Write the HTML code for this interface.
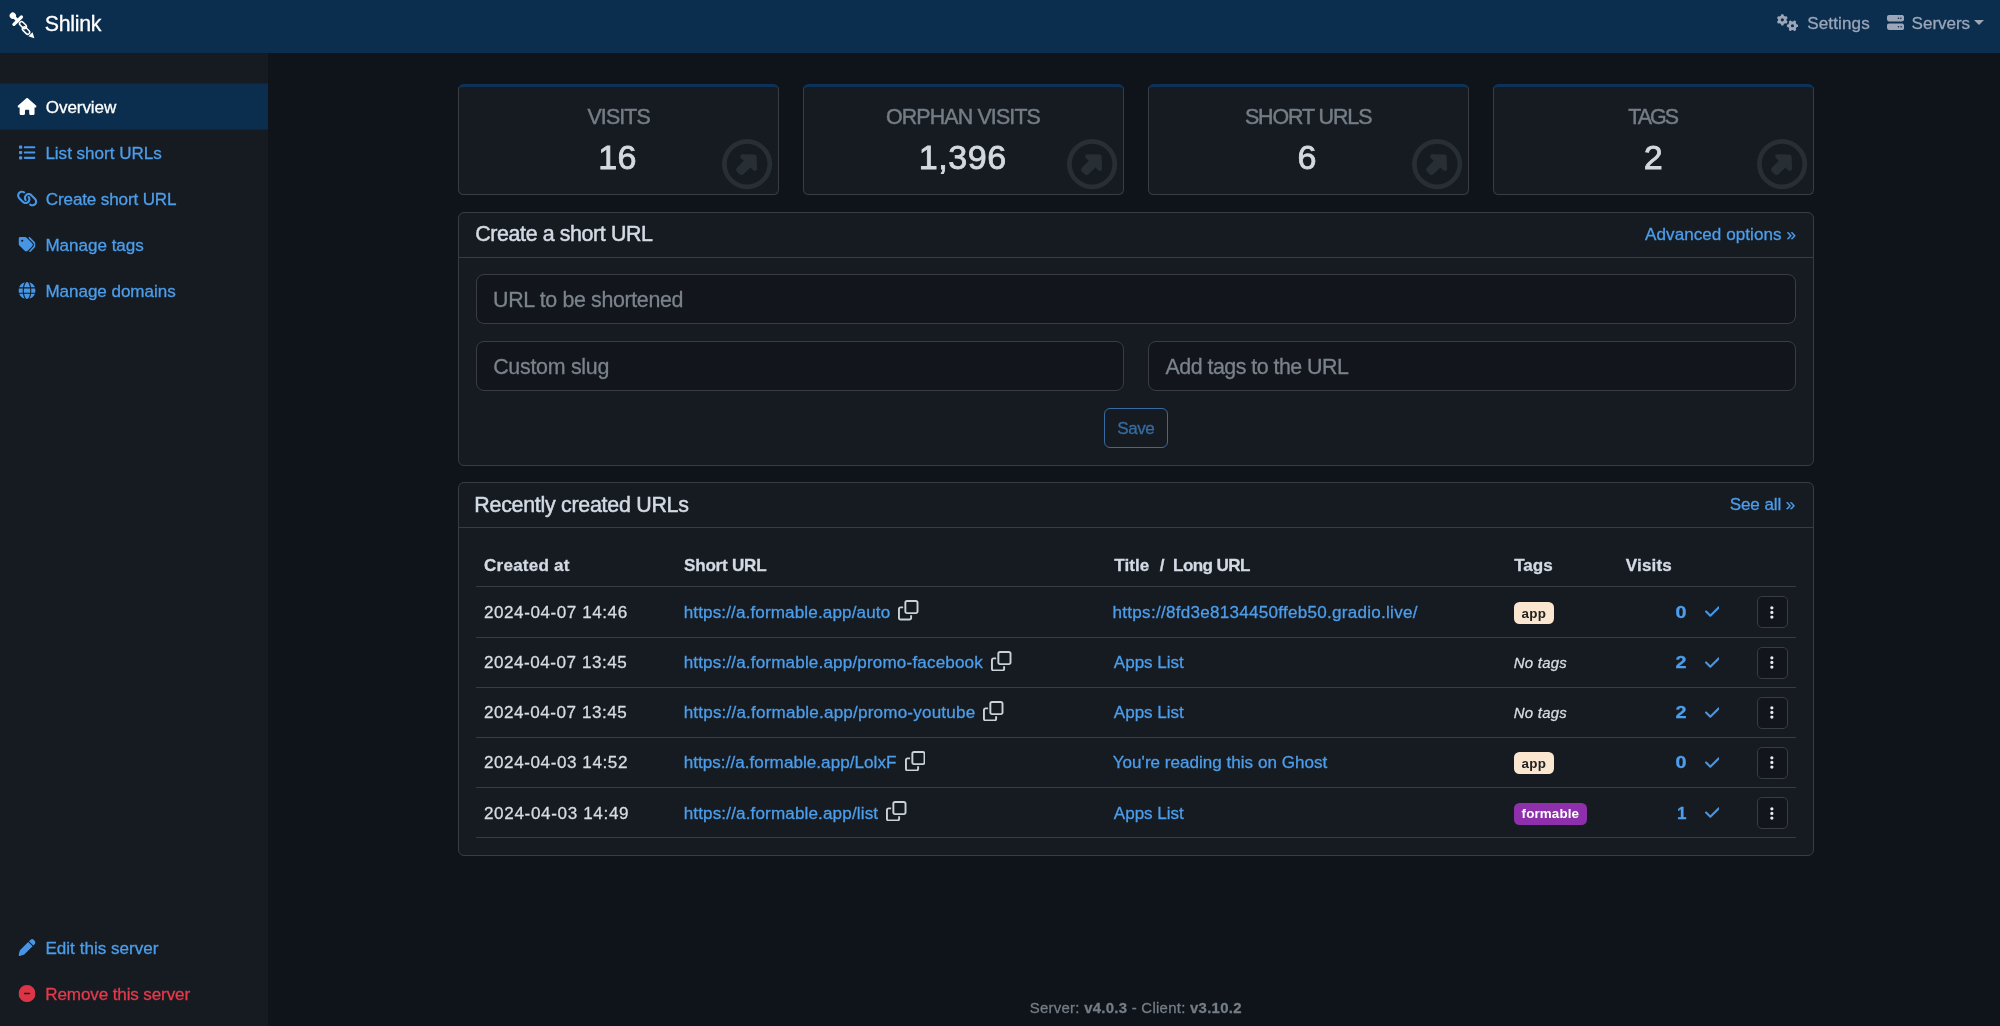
<!DOCTYPE html>
<html lang="en">
<head>
<meta charset="utf-8">
<title>Shlink</title>
<style>
*{box-sizing:border-box}
html,body{margin:0;padding:0}
body{width:2000px;height:1026px;overflow:hidden;background:#0f131a;color:#c9d1d9;font-family:"Liberation Sans",sans-serif;font-size:17.07px;line-height:25.6px;position:relative}
a{color:#4696e5;text-decoration:none}
svg{display:block}
span{white-space:nowrap;-webkit-text-stroke:.3px}
.navbar,.aside,main{will-change:transform}
/* navbar */
.navbar{position:absolute;left:0;top:0;width:2000px;height:53px;background:#0b2d4e}
.brand{position:absolute;left:0;top:0;height:53px;color:#fff;font-size:21.33px}
.brand svg{position:absolute;left:4px;top:6px}
.brand .bt{position:absolute;left:44.5px;top:7.5px;line-height:32px}
.nav{list-style:none;margin:0;padding:0}
.nav li{position:absolute;top:10.5px;height:25.6px;line-height:25.6px;color:#9ba6b8}
.nav li svg{position:absolute}
.nav li .nt{position:absolute;top:0}
.caret{position:absolute;left:87.2px;top:9.7px;width:0;height:0;border-left:5.1px solid transparent;border-right:5.1px solid transparent;border-top:5.3px solid #9ba6b8}
/* aside */
.aside{position:absolute;left:0;top:53px;width:268px;height:973px;background:#161b22}
.aside a{position:absolute;left:0;width:268px;height:46px;display:block;color:#4696e5}
.aside a svg{position:absolute}
.aside a .mt{position:absolute;left:45.5px;top:11.4px}
.aside a.active{background:linear-gradient(#112438 0,#112438 1px,#0b2d4e 1px,#0b2d4e 46px,#112438 46px);color:#fff}
.aside a.active svg{margin-top:.5px}
.aside a.active .mt{margin-top:.5px}
.aside a.danger{color:#dc3545}
/* main */
.container{position:absolute;left:458px;top:83.5px;width:1355.5px}
.cards{display:flex;gap:24.5px}
.hcard{position:relative;flex:0 0 320.5px;height:111px;background:#161b22;border:1px solid #393d43;border-top:3.2px solid #0c3257;border-radius:6px;text-align:center;color:#c9d1d9;display:block}
.hcard h5{margin:0;position:absolute;left:0;right:0;top:18.7px;font-size:21.4px;line-height:25.6px;font-weight:normal;color:#747d86;text-transform:uppercase}
.hcard h5 span{-webkit-text-stroke:.45px}
.hcard .num span{-webkit-text-stroke:.8px}
.hcard .num{position:absolute;left:0;right:0;top:50px;font-size:34.13px;line-height:41px;color:#d3d9e1}
.hcard .arr{position:absolute;right:4.9px;bottom:4.7px;opacity:.1}
.card{background:#161b22;border:1px solid #393d43;border-radius:6px}
.card1{position:absolute;left:0;top:128.5px;width:1355.5px;height:253.5px}
.card2{position:absolute;left:0;top:398.4px;width:1355.5px;height:374.1px}
.card2 .card-header{height:45.1px}
.card2 .card-header .t{top:.9px}
th{padding-top:3.2px}
.card-header{height:44.5px;border-bottom:1px solid #393d43;display:flex;justify-content:space-between;align-items:center;padding:0 17px;margin:0;font-weight:normal;font-size:17.07px}
.card-header .t{font-size:21.4px;color:#d3dae3;position:relative;top:.3px}
.card-header .t span{-webkit-text-stroke:.5px}
.card-body{padding:16.5px 17px}
.inp{height:50px;border:1px solid #393d43;border-radius:8px;background:#12151b;color:#7a838c;font-size:21.4px;line-height:32px;padding:8.9px 17.5px 7.1px;white-space:nowrap}
.row2{display:flex;gap:24px;margin-top:17px}
.row2 .inp{flex:1 1 0}
.savewrap{text-align:center;margin-top:16.7px;height:40.5px}
.btn{display:inline-block;width:64px;height:40.5px;border:1px solid #4696e5;border-radius:6px;color:#4696e5;line-height:40px;opacity:.65;text-align:center}
/* table */
table,thead,tbody{display:block;border-collapse:collapse}
tr{display:flex;border-bottom:1px solid #393d43;align-items:center}
thead tr{height:42.4px}
tbody tr:first-child{height:50.75px}
tbody tr{height:50.15px}
th,td{display:block;padding:1.6px 8.5px 0;text-align:left;white-space:nowrap;flex:0 0 auto}
th{font-weight:bold;color:#d3dae3}
.c1{width:200px}.c2{width:429px}.c3{width:400px}.c4{width:112.5px}.c5{width:77.5px}.c6{width:33px}.c7{width:68px}
#th3s{margin:0 8.3px 0 10.9px}
td.c5{text-align:right;font-weight:bold}
td.c2{display:flex;align-items:center}
td.c2 .cp{margin-left:7.2px;position:relative;top:-2.2px}
td.c6 .ck{position:relative;left:1px}
td.c6,td.c7{padding-top:0}
td.c7{position:relative;top:.4px}
td.c5 a.w span{display:inline-block;transform:scaleX(1.16);transform-origin:right center}
.badge{display:inline-block;font-size:13.4px;line-height:12.8px;font-weight:bold;padding:5.9px 0 3.3px;width:40.5px;text-align:center;border-radius:5.5px;vertical-align:middle;position:relative;top:-.5px}
.badge span{-webkit-text-stroke:0}
.notags{font-style:italic;font-size:14.93px}
.dd{display:flex;align-items:center;justify-content:center;margin-left:auto;width:30.5px;height:32px;border:1px solid #393d43;border-radius:5px;background:#12151b}
td.c7{display:flex}
.footer{position:absolute;left:268px;width:1732px;top:995px;text-align:center;font-size:14.93px;color:#747d86;white-space:nowrap}
td{color:#d6dce4}
.mt,td a span,.hl span{color:#4c9eec}
.active .mt{color:#fff}
.danger .mt{color:#e63a4b}
.hcard{border-radius:5.5px}

</style>
</head>
<body>
<nav class="navbar">
  <a class="brand"><svg width="40" height="40" viewBox="0 0 40 40" aria-hidden="true"><g transform="translate(8.8 9.7) rotate(45.5)" fill="#fff" stroke="none">
<circle cx="0" cy="0" r="3.15"/>
<rect x="0" y="-1.55" width="8.6" height="3.1"/>
<rect x="5.3" y="-6.9" width="3.3" height="13.8" rx="1.65"/>
<rect x="9.8" y="-2.7" width="8.0" height="4.0" rx="2" fill="none" stroke="#fff" stroke-width="1.5"/>
<rect x="15.6" y="-1.0" width="8.6" height="4.0" rx="2" fill="none" stroke="#fff" stroke-width="1.5"/>
<path d="M25.6 -2.5 L31.2 0.4 L25.6 3.3 Z"/>
</g></svg><span class="bt"><span id="brand" style="letter-spacing:-0.302px;position:relative;left:0.33px;">Shlink</span></span></a>
  <ul class="nav">
    <li style="left:1777.4px"><svg viewBox="0 0 640 512" width="21.34" height="17.07" style="left:0;top:3.8px" aria-hidden="true"><path fill="currentColor" d="M308.500 135.300c7.100-6.300 9.900-16.200 6.200-25c-2.300-5.300-4.800-10.500-7.600-15.500L304 89.400c-3-5-6.300-9.900-9.800-14.600c-5.700-7.600-15.700-10.100-24.700-7.100l-28.200 9.300c-10.700-8.800-23-16-36.200-20.900L199 27.100c-1.900-9.300-9.100-16.700-18.500-17.800C173.900 8.400 167.200 8 160.400 8h-.7c-6.800 0-13.500 .4-20.100 1.200c-9.400 1.100-16.600 8.600-18.500 17.800L115 56.100c-13.300 5-25.500 12.100-36.200 20.900L50.500 67.800c-9-3-19-.5-24.700 7.100c-3.500 4.700-6.800 9.600-9.900 14.600l-3 5.300c-2.800 5-5.300 10.200-7.600 15.600c-3.700 8.700-.9 18.600 6.200 25l22.200 19.800C32.600 161.900 32 168.900 32 176s.6 14.100 1.700 20.900L11.500 216.700c-7.100 6.300-9.900 16.200-6.200 25c2.300 5.300 4.800 10.500 7.600 15.600l3 5.200c3 5.100 6.300 9.900 9.900 14.600c5.700 7.600 15.700 10.100 24.700 7.100l28.200-9.300c10.700 8.800 23 16 36.200 20.900l6.100 29.100c1.900 9.300 9.100 16.700 18.500 17.800c6.700 .8 13.500 1.200 20.400 1.200s13.700-.4 20.400-1.200c9.400-1.100 16.600-8.600 18.500-17.800l6.100-29.100c13.300-5 25.500-12.100 36.200-20.900l28.200 9.300c9 3 19 .5 24.700-7.100c3.500-4.700 6.800-9.500 9.800-14.600l3.100-5.400c2.800-5 5.300-10.200 7.600-15.500c3.700-8.700 .9-18.600-6.200-25l-22.200-19.800c1.100-6.800 1.700-13.800 1.700-20.900s-.6-14.100-1.700-20.900l22.200-19.800zM112 176a48 48 0 1 1 96 0 48 48 0 1 1 -96 0zM504.700 500.500c6.300 7.100 16.200 9.900 25 6.200c5.300-2.300 10.500-4.800 15.500-7.600l5.400-3.100c5-3 9.900-6.300 14.600-9.800c7.600-5.700 10.100-15.700 7.100-24.700l-9.300-28.200c8.800-10.700 16-23 20.900-36.200l29.100-6.100c9.300-1.900 16.700-9.100 17.800-18.500c.8-6.700 1.200-13.500 1.200-20.400s-.4-13.700-1.200-20.400c-1.100-9.400-8.600-16.600-17.800-18.500L583.900 307c-5-13.300-12.100-25.500-20.900-36.200l9.300-28.200c3-9 .5-19-7.100-24.700c-4.700-3.500-9.600-6.800-14.600-9.900l-5.300-3c-5-2.800-10.200-5.300-15.600-7.600c-8.700-3.700-18.600-.9-25 6.200l-19.800 22.200c-6.800-1.100-13.800-1.700-20.900-1.700s-14.100 .6-20.900 1.700l-19.800-22.200c-6.300-7.100-16.200-9.900-25-6.200c-5.300 2.300-10.500 4.800-15.600 7.600l-5.200 3c-5.100 3-9.900 6.300-14.600 9.900c-7.600 5.700-10.100 15.700-7.100 24.700l9.300 28.200c-8.800 10.700-16 23-20.900 36.200L315.100 313c-9.300 1.900-16.700 9.100-17.800 18.500c-.8 6.700-1.200 13.500-1.200 20.400s.4 13.700 1.200 20.400c1.100 9.400 8.600 16.600 17.800 18.500l29.100 6.100c5 13.300 12.100 25.500 20.900 36.200l-9.300 28.200c-3 9-.5 19 7.100 24.700c4.700 3.500 9.500 6.800 14.600 9.800l5.400 3.100c5 2.800 10.200 5.300 15.500 7.600c8.700 3.700 18.600 .9 25-6.200l19.800-22.200c6.800 1.100 13.800 1.700 20.900 1.700s14.100-.6 20.900-1.700l19.800 22.200zM464 304a48 48 0 1 1 0 96 48 48 0 1 1 0-96z"/></svg><span class="nt" style="left:30.4px"><span id="settings" style="letter-spacing:0.141px;position:relative;left:-0.65px;">Settings</span></span></li>
    <li style="left:1886.4px"><svg viewBox="0 0 512 512" width="17.07" height="17.07" style="left:0.5px;top:3.8px" aria-hidden="true"><path fill="currentColor" d="M64 32C28.700 32 0 60.700 0 96v64c0 35.300 28.700 64 64 64H448c35.300 0 64-28.700 64-64V96c0-35.300-28.700-64-64-64H64zm280 72a24 24 0 1 1 0 48 24 24 0 1 1 0-48zm48 24a24 24 0 1 1 48 0 24 24 0 1 1 -48 0zM64 288c-35.300 0-64 28.700-64 64v64c0 35.300 28.700 64 64 64H448c35.300 0 64-28.700 64-64V352c0-35.300-28.700-64-64-64H64zm280 72a24 24 0 1 1 0 48 24 24 0 1 1 0-48zm56 24a24 24 0 1 1 48 0 24 24 0 1 1 -48 0z"/></svg><span class="nt" style="left:26px"><span id="servers" style="letter-spacing:-0.042px;position:relative;left:-0.80px;">Servers</span></span><i class="caret"></i></li>
  </ul>
</nav>
<aside class="aside">
  <a class="active" style="top:30px;height:47px;padding-top:0"><svg viewBox="0 0 576 512" width="19.20" height="17.07" style="left:17.26px;top:14.46px;transform:translateX(.5px);" aria-hidden="true"><path fill="currentColor" d="M575.8 255.5c0 18-15 32.1-32 32.1h-32l.7 160.2c0 2.700-.2 5.400-.5 8.100V472c0 22.100-17.900 40-40 40H456c-1.100 0-2.200 0-3.300-.1c-1.400 .1-2.800 .1-4.200 .1H416 392c-22.100 0-40-17.900-40-40V448 384c0-17.700-14.300-32-32-32H256c-17.700 0-32 14.300-32 32v64 24c0 22.100-17.900 40-40 40H160 128.100c-1.500 0-3-.1-4.500-.2c-1.200 .1-2.400 .2-3.600 .2H104c-22.100 0-40-17.900-40-40V360c0-.9 0-1.900 .1-2.800V287.600H32c-18 0-32-14-32-32.100c0-9 3-17 10-24L266.400 8c7-7 15-8 22-8s15 2 21 7L564.800 231.500c8 7 12 15 11 24z"/></svg><span class="mt"><span id="m1" style="letter-spacing:-0.101px;position:relative;left:0.37px;">Overview</span></span></a>
  <a style="top:76.5px"><svg viewBox="0 0 512 512" width="17.07" height="17.07" style="left:18.33px;top:14.46px;transform:translateX(.5px);" aria-hidden="true"><path fill="currentColor" d="M40 48C26.700 48 16 58.700 16 72v48c0 13.300 10.700 24 24 24H88c13.300 0 24-10.700 24-24V72c0-13.300-10.700-24-24-24H40zM192 64c-17.700 0-32 14.300-32 32s14.300 32 32 32H480c17.700 0 32-14.300 32-32s-14.300-32-32-32H192zm0 160c-17.700 0-32 14.300-32 32s14.300 32 32 32H480c17.700 0 32-14.300 32-32s-14.300-32-32-32H192zm0 160c-17.700 0-32 14.300-32 32s14.300 32 32 32H480c17.700 0 32-14.300 32-32s-14.300-32-32-32H192zM16 232v48c0 13.300 10.700 24 24 24H88c13.300 0 24-10.700 24-24V232c0-13.300-10.700-24-24-24H40c-13.300 0-24 10.700-24 24zM40 368c-13.300 0-24 10.700-24 24v48c0 13.300 10.700 24 24 24H88c13.300 0 24-10.700 24-24V392c0-13.300-10.700-24-24-24H40z"/></svg><span class="mt"><span id="m2" style="letter-spacing:-0.019px;position:relative;left:-0.14px;">List short URLs</span></span></a>
  <a style="top:122.5px"><svg viewBox="0 0 640 512" width="21.34" height="17.07" style="left:16.20px;top:14.46px;transform:translateX(.5px) scaleX(-1);" aria-hidden="true"><path fill="currentColor" d="M579.800 267.700c56.500-56.500 56.500-148 0-204.500c-50-50-128.800-56.500-186.300-15.400l-1.600 1.100c-14.400 10.300-17.700 30.300-7.400 44.600s30.300 17.700 44.600 7.400l1.600-1.100c32.100-22.900 76-19.300 103.800 8.600c31.500 31.500 31.500 82.500 0 114L422.300 334.800c-31.500 31.500-82.500 31.500-114 0c-27.900-27.900-31.500-71.800-8.600-103.800l1.100-1.600c10.300-14.400 6.900-34.400-7.400-44.600s-34.400-6.900-44.600 7.400l-1.100 1.600C206.500 251.200 213 330 263 380c56.500 56.500 148 56.500 204.500 0L579.800 267.700zM60.200 244.300c-56.500 56.500-56.500 148 0 204.500c50 50 128.800 56.500 186.300 15.400l1.600-1.100c14.400-10.300 17.700-30.300 7.400-44.600s-30.300-17.700-44.600-7.400l-1.600 1.100c-32.100 22.900-76 19.300-103.800-8.600C74 372 74 321 105.500 289.500L217.700 177.200c31.500-31.500 82.500-31.500 114 0c27.900 27.900 31.500 71.800 8.600 103.900l-1.100 1.600c-10.300 14.400-6.900 34.400 7.400 44.600s34.400 6.900 44.600-7.400l1.100-1.600C433.500 260.800 427 182 377 132c-56.500-56.500-148-56.500-204.500 0L60.200 244.300z"/></svg><span class="mt"><span id="m3" style="letter-spacing:-0.137px;position:relative;left:0.31px;">Create short URL</span></span></a>
  <a style="top:168.5px"><svg viewBox="0 0 512 512" width="17.07" height="17.07" style="left:18.33px;top:14.46px;transform:translateX(.5px);" aria-hidden="true"><path fill="currentColor" d="M345 39.100L472.800 168.400c52.400 53 52.400 138.200 0 191.200L360.800 472.900c-9.300 9.400-24.500 9.500-33.900 .2s-9.500-24.500-.2-33.900L438.600 325.900c33.900-34.300 33.900-89.400 0-123.700L310.900 72.900c-9.300-9.400-9.200-24.600 .2-33.900s24.600-9.200 33.900 .2zM0 229.500V80C0 53.500 21.500 32 48 32H197.500c17 0 33.300 6.700 45.300 18.700l168 168c25 25 25 65.500 0 90.500L277.300 442.700c-25 25-65.500 25-90.500 0l-168-168C6.700 262.700 0 246.500 0 229.500zM144 144a32 32 0 1 0 -64 0 32 32 0 1 0 64 0z"/></svg><span class="mt"><span id="m4" style="letter-spacing:-0.018px;position:relative;left:-0.14px;">Manage tags</span></span></a>
  <a style="top:214.5px"><svg viewBox="0 0 512 512" width="17.07" height="17.07" style="left:18.33px;top:14.46px;transform:translateX(.5px);" aria-hidden="true"><path fill="currentColor" d="M352 256c0 22.200-1.200 43.600-3.300 64H163.300c-2.200-20.400-3.300-41.800-3.300-64s1.200-43.600 3.300-64H348.700c2.200 20.400 3.300 41.800 3.300 64zm28.800-64H503.900c5.300 20.500 8.100 41.900 8.100 64s-2.800 43.500-8.100 64H380.800c2.100-20.600 3.200-42 3.200-64s-1.100-43.400-3.200-64zm112.600-32H376.700c-10-63.900-29.800-117.400-55.300-151.600c78.300 20.700 142 77.500 171.900 151.600zm-149.100 0H167.700c6.100-36.400 15.500-68.600 27-94.700c10.500-23.600 22.200-40.700 33.500-51.500C239.400 3.200 248.700 0 256 0s16.600 3.200 27.800 13.800c11.300 10.800 23 27.900 33.500 51.500c11.600 26 20.900 58.200 27 94.700zm-209 0H18.600C48.600 85.900 112.200 29.100 190.600 8.400C165.100 42.600 145.300 96.100 135.300 160zM8.100 192H131.200c-2.100 20.600-3.200 42-3.200 64s1.100 43.400 3.200 64H8.100C2.800 299.500 0 278.100 0 256s2.800-43.500 8.100-64zM194.700 446.600c-11.600-26-20.900-58.200-27-94.600H344.300c-6.100 36.400-15.500 68.600-27 94.600c-10.500 23.600-22.200 40.700-33.500 51.500C272.600 508.800 263.300 512 256 512s-16.600-3.200-27.800-13.800c-11.300-10.800-23-27.900-33.500-51.500zM135.300 352c10 63.900 29.800 117.400 55.300 151.600C112.200 482.900 48.600 426.100 18.600 352H135.300zm358.100 0c-30 74.100-93.600 130.900-171.900 151.600c25.500-34.200 45.200-87.700 55.300-151.600H493.400z"/></svg><span class="mt"><span id="m5" style="letter-spacing:-0.044px;position:relative;left:-0.14px;">Manage domains</span></span></a>
  <a style="top:871.5px"><svg viewBox="0 0 512 512" width="17.07" height="17.07" style="left:18.33px;top:14.46px;transform:translateX(.5px);" aria-hidden="true"><path fill="currentColor" d="M362.700 19.300L314.300 67.700 444.300 197.700l48.400-48.400c25-25 25-65.500 0-90.500L453.300 19.300c-25-25-65.500-25-90.500 0zm-71 71L58.600 323.500c-10.400 10.400-18 23.300-22.200 37.400L1 481.200C-1.500 489.700 .8 498.800 7 505s15.300 8.500 23.700 6.100l120.300-35.400c14.100-4.200 27-11.800 37.400-22.200L421.700 220.300 291.700 90.300z"/></svg><span class="mt"><span id="m6" style="letter-spacing:0.022px;position:relative;left:-0.14px;">Edit this server</span></span></a>
  <a class="danger" style="top:917.5px"><svg viewBox="0 0 512 512" width="17.07" height="17.07" style="left:18.33px;top:14.46px;transform:translateX(.5px);" aria-hidden="true"><path fill="currentColor" d="M256 512A256 256 0 1 0 256 0a256 256 0 1 0 0 512zM184 232H328c13.300 0 24 10.700 24 24s-10.700 24-24 24H184c-13.300 0-24-10.700-24-24s10.700-24 24-24z"/></svg><span class="mt"><span id="m7" style="letter-spacing:-0.125px;position:relative;left:-0.24px;">Remove this server</span></span></a>
</aside>
<main>
<div class="container">
  <div class="cards">
    <a class="hcard"><h5><span id="h1" style="letter-spacing:-0.917px;position:relative;left:0.41px;">Visits</span></h5><div class="num"><span id="n1" style="letter-spacing:0.266px;position:relative;left:-0.76px;">16</span></div><svg class="arr" viewBox="0 0 512 512" width="50.20" height="50.20" style="transform:rotate(-45deg);" aria-hidden="true"><path fill="#c9d1d9" d="M464 256A208 208 0 1 1 48 256a208 208 0 1 1 416 0zM0 256a256 256 0 1 0 512 0A256 256 0 1 0 0 256zM294.600 151.200c-4.200-4.600-10.100-7.200-16.400-7.200C266 144 256 154 256 166.300V208H160c-17.700 0-32 14.300-32 32v32c0 17.700 14.300 32 32 32h96v41.700c0 12.300 10 22.300 22.300 22.300c6.200 0 12.100-2.600 16.400-7.200l84-91c3.500-3.800 5.400-8.700 5.400-13.900s-1.900-10.100-5.400-13.900l-84-91z"/></svg></a>
    <a class="hcard"><h5><span id="h2" style="letter-spacing:-0.855px;position:relative;left:-0.25px;">Orphan visits</span></h5><div class="num"><span id="n2" style="letter-spacing:0.499px;position:relative;left:-0.55px;">1,396</span></div><svg class="arr" viewBox="0 0 512 512" width="50.20" height="50.20" style="transform:rotate(-45deg);" aria-hidden="true"><path fill="#c9d1d9" d="M464 256A208 208 0 1 1 48 256a208 208 0 1 1 416 0zM0 256a256 256 0 1 0 512 0A256 256 0 1 0 0 256zM294.600 151.200c-4.200-4.600-10.100-7.200-16.400-7.200C266 144 256 154 256 166.300V208H160c-17.700 0-32 14.300-32 32v32c0 17.700 14.300 32 32 32h96v41.700c0 12.300 10 22.300 22.300 22.300c6.200 0 12.100-2.600 16.400-7.200l84-91c3.500-3.800 5.400-8.700 5.400-13.900s-1.900-10.100-5.400-13.900l-84-91z"/></svg></a>
    <a class="hcard"><h5><span id="h3" style="letter-spacing:-1.056px;position:relative;left:-0.10px;">Short URLs</span></h5><div class="num"><span id="n3" style="position:relative;left:-1.21px;">6</span></div><svg class="arr" viewBox="0 0 512 512" width="50.20" height="50.20" style="transform:rotate(-45deg);" aria-hidden="true"><path fill="#c9d1d9" d="M464 256A208 208 0 1 1 48 256a208 208 0 1 1 416 0zM0 256a256 256 0 1 0 512 0A256 256 0 1 0 0 256zM294.600 151.200c-4.200-4.600-10.100-7.200-16.400-7.200C266 144 256 154 256 166.300V208H160c-17.700 0-32 14.300-32 32v32c0 17.700 14.300 32 32 32h96v41.700c0 12.300 10 22.300 22.300 22.300c6.200 0 12.100-2.600 16.400-7.200l84-91c3.500-3.800 5.400-8.700 5.400-13.900s-1.900-10.100-5.400-13.900l-84-91z"/></svg></a>
    <a class="hcard"><h5><span id="h4" style="letter-spacing:-2.005px;position:relative;left:-0.57px;">Tags</span></h5><div class="num"><span id="n4">2</span></div><svg class="arr" viewBox="0 0 512 512" width="50.20" height="50.20" style="transform:rotate(-45deg);" aria-hidden="true"><path fill="#c9d1d9" d="M464 256A208 208 0 1 1 48 256a208 208 0 1 1 416 0zM0 256a256 256 0 1 0 512 0A256 256 0 1 0 0 256zM294.600 151.200c-4.200-4.600-10.100-7.200-16.400-7.200C266 144 256 154 256 166.300V208H160c-17.700 0-32 14.300-32 32v32c0 17.700 14.300 32 32 32h96v41.700c0 12.300 10 22.300 22.300 22.300c6.200 0 12.100-2.600 16.400-7.200l84-91c3.500-3.800 5.400-8.700 5.400-13.900s-1.900-10.100-5.400-13.900l-84-91z"/></svg></a>
  </div>
  <section class="card card1">
    <h5 class="card-header"><span class="t"><span id="ct1" style="letter-spacing:-0.394px;position:relative;left:-0.70px;">Create a short URL</span></span><a class="hl"><span id="adv" style="letter-spacing:0.054px;position:relative;left:0.46px;">Advanced options &raquo;</span></a></h5>
    <div class="card-body">
      <div class="inp"><span id="p1" style="letter-spacing:-0.351px;position:relative;left:-1.40px;">URL to be shortened</span></div>
      <div class="row2"><div class="inp"><span id="p2" style="letter-spacing:-0.265px;position:relative;left:-1.35px;">Custom slug</span></div><div class="inp"><span id="p3" style="letter-spacing:-0.516px;position:relative;left:-0.74px;">Add tags to the URL</span></div></div>
      <div class="savewrap"><span class="btn"><span id="save" style="letter-spacing:-0.431px;position:relative;left:0.10px;">Save</span></span></div>
    </div>
  </section>
  <section class="card card2">
    <h5 class="card-header"><span class="t"><span id="ct2" style="letter-spacing:-0.270px;position:relative;left:-1.67px;">Recently created URLs</span></span><a class="hl"><span id="seeall" style="letter-spacing:-0.100px;position:relative;left:-0.29px;">See all &raquo;</span></a></h5>
    <div class="card-body">
      <table>
        <thead><tr><th class="c1"><span id="th1" style="letter-spacing:0.202px;position:relative;left:-0.41px;">Created at</span></th><th class="c2"><span id="th2" style="letter-spacing:-0.217px;position:relative;left:-0.48px;">Short URL</span></th><th class="c3"><span id="th3a" style="letter-spacing:0.107px;position:relative;left:0.66px;">Title</span><span id="th3s">/</span><span id="th3b" style="letter-spacing:-0.603px;position:relative;left:0.37px;">Long URL</span></th><th class="c4"><span id="th4" style="letter-spacing:0.022px;position:relative;left:0.66px;">Tags</span></th><th class="c5"><span id="th5" style="letter-spacing:0.140px;position:relative;left:-0.19px;">Visits</span></th><th class="c6"></th><th class="c7"></th></tr></thead>
        <tbody>
        <tr><td class="c1"><span id="d1" style="letter-spacing:0.563px;position:relative;left:-0.55px;">2024-04-07 14:46</span></td><td class="c2"><a><span id="s1" style="letter-spacing:0.136px;position:relative;left:-0.88px;">https://a.formable.app/auto</span></a><svg class="cp" viewBox="0 0 512 512" width="20.48" height="20.48" style="" aria-hidden="true"><path fill="#c9d1d9" d="M64 464H288c8.800 0 16-7.200 16-16V384h48v64c0 35.300-28.700 64-64 64H64c-35.300 0-64-28.700-64-64V224c0-35.300 28.700-64 64-64h64v48H64c-8.800 0-16 7.200-16 16V448c0 8.800 7.200 16 16 16zM224 304H448c8.800 0 16-7.200 16-16V64c0-8.800-7.200-16-16-16H224c-8.800 0-16 7.200-16 16V288c0 8.800 7.200 16 16 16zm-64-16V64c0-35.300 28.700-64 64-64H448c35.300 0 64 28.700 64 64V288c0 35.300-28.700 64-64 64H224c-35.300 0-64-28.700-64-64z"/></svg></td><td class="c3"><a><span id="l1" style="letter-spacing:0.267px;position:relative;left:-0.91px;">https://8fd3e8134450ffeb50.gradio.live/</span></a></td><td class="c4"><span class="badge" style="background:#fbe6d0;color:#222;width:40.5px"><span id="b1" style="letter-spacing:0.372px;position:relative;left:0.21px;">app</span></span></td><td class="c5"><a class="w"><span id="v1">0</span></a></td><td class="c6"><svg class="ck" viewBox="0 0 448 512" width="14.94" height="17.07" style="" aria-hidden="true"><path fill="#4696e5" d="M438.600 105.400c12.500 12.500 12.500 32.800 0 45.300l-256 256c-12.500 12.500-32.800 12.500-45.300 0l-128-128c-12.500-12.500-12.500-32.800 0-45.300s32.800-12.500 45.300 0L160 338.700 393.400 105.400c12.500-12.500 32.800-12.500 45.300 0z"/></svg></td><td class="c7"><span class="dd"><svg viewBox="0 0 128 512" width="3.73" height="14.93" style="" aria-hidden="true"><path fill="#e6ebf1" d="M64 360a56 56 0 1 0 0 112 56 56 0 1 0 0-112zm0-160a56 56 0 1 0 0 112 56 56 0 1 0 0-112zM120 96A56 56 0 1 0 8 96a56 56 0 1 0 112 0z"/></svg></span></td></tr><tr><td class="c1"><span id="d2" style="letter-spacing:0.539px;position:relative;left:-0.55px;">2024-04-07 13:45</span></td><td class="c2"><a><span id="s2" style="letter-spacing:0.170px;position:relative;left:-0.88px;">https://a.formable.app/promo-facebook</span></a><svg class="cp" viewBox="0 0 512 512" width="20.48" height="20.48" style="" aria-hidden="true"><path fill="#c9d1d9" d="M64 464H288c8.800 0 16-7.200 16-16V384h48v64c0 35.300-28.700 64-64 64H64c-35.300 0-64-28.700-64-64V224c0-35.300 28.700-64 64-64h64v48H64c-8.800 0-16 7.200-16 16V448c0 8.800 7.200 16 16 16zM224 304H448c8.800 0 16-7.200 16-16V64c0-8.800-7.200-16-16-16H224c-8.800 0-16 7.200-16 16V288c0 8.800 7.200 16 16 16zm-64-16V64c0-35.300 28.700-64 64-64H448c35.300 0 64 28.700 64 64V288c0 35.300-28.700 64-64 64H224c-35.300 0-64-28.700-64-64z"/></svg></td><td class="c3"><a><span id="l2" style="letter-spacing:-0.042px;position:relative;left:0.35px;">Apps List</span></a></td><td class="c4"><i class="notags"><span id="b2" style="letter-spacing:0.270px;position:relative;left:0.20px;">No tags</span></i></td><td class="c5"><a class="w"><span id="v2">2</span></a></td><td class="c6"><svg class="ck" viewBox="0 0 448 512" width="14.94" height="17.07" style="" aria-hidden="true"><path fill="#4696e5" d="M438.600 105.400c12.500 12.500 12.500 32.800 0 45.300l-256 256c-12.500 12.500-32.800 12.500-45.300 0l-128-128c-12.500-12.500-12.500-32.800 0-45.300s32.800-12.500 45.300 0L160 338.700 393.400 105.400c12.500-12.500 32.800-12.500 45.300 0z"/></svg></td><td class="c7"><span class="dd"><svg viewBox="0 0 128 512" width="3.73" height="14.93" style="" aria-hidden="true"><path fill="#e6ebf1" d="M64 360a56 56 0 1 0 0 112 56 56 0 1 0 0-112zm0-160a56 56 0 1 0 0 112 56 56 0 1 0 0-112zM120 96A56 56 0 1 0 8 96a56 56 0 1 0 112 0z"/></svg></span></td></tr><tr><td class="c1"><span id="d3" style="letter-spacing:0.539px;position:relative;left:-0.55px;">2024-04-07 13:45</span></td><td class="c2"><a><span id="s3" style="letter-spacing:0.199px;position:relative;left:-0.88px;">https://a.formable.app/promo-youtube</span></a><svg class="cp" viewBox="0 0 512 512" width="20.48" height="20.48" style="" aria-hidden="true"><path fill="#c9d1d9" d="M64 464H288c8.800 0 16-7.200 16-16V384h48v64c0 35.300-28.700 64-64 64H64c-35.300 0-64-28.700-64-64V224c0-35.300 28.700-64 64-64h64v48H64c-8.800 0-16 7.200-16 16V448c0 8.800 7.200 16 16 16zM224 304H448c8.800 0 16-7.200 16-16V64c0-8.800-7.200-16-16-16H224c-8.800 0-16 7.200-16 16V288c0 8.800 7.200 16 16 16zm-64-16V64c0-35.300 28.700-64 64-64H448c35.300 0 64 28.700 64 64V288c0 35.300-28.700 64-64 64H224c-35.300 0-64-28.700-64-64z"/></svg></td><td class="c3"><a><span id="l3" style="letter-spacing:-0.042px;position:relative;left:0.35px;">Apps List</span></a></td><td class="c4"><i class="notags"><span id="b3" style="letter-spacing:0.270px;position:relative;left:0.20px;">No tags</span></i></td><td class="c5"><a class="w"><span id="v3">2</span></a></td><td class="c6"><svg class="ck" viewBox="0 0 448 512" width="14.94" height="17.07" style="" aria-hidden="true"><path fill="#4696e5" d="M438.600 105.400c12.500 12.500 12.500 32.800 0 45.300l-256 256c-12.500 12.500-32.800 12.500-45.300 0l-128-128c-12.500-12.500-12.500-32.800 0-45.300s32.800-12.500 45.300 0L160 338.700 393.400 105.400c12.500-12.500 32.800-12.500 45.300 0z"/></svg></td><td class="c7"><span class="dd"><svg viewBox="0 0 128 512" width="3.73" height="14.93" style="" aria-hidden="true"><path fill="#e6ebf1" d="M64 360a56 56 0 1 0 0 112 56 56 0 1 0 0-112zm0-160a56 56 0 1 0 0 112 56 56 0 1 0 0-112zM120 96A56 56 0 1 0 8 96a56 56 0 1 0 112 0z"/></svg></span></td></tr><tr><td class="c1"><span id="d4" style="letter-spacing:0.581px;position:relative;left:-0.55px;">2024-04-03 14:52</span></td><td class="c2"><a><span id="s4" style="letter-spacing:0.049px;position:relative;left:-0.88px;">https://a.formable.app/LolxF</span></a><svg class="cp" viewBox="0 0 512 512" width="20.48" height="20.48" style="" aria-hidden="true"><path fill="#c9d1d9" d="M64 464H288c8.800 0 16-7.200 16-16V384h48v64c0 35.300-28.700 64-64 64H64c-35.300 0-64-28.700-64-64V224c0-35.300 28.700-64 64-64h64v48H64c-8.800 0-16 7.200-16 16V448c0 8.800 7.200 16 16 16zM224 304H448c8.800 0 16-7.200 16-16V64c0-8.800-7.200-16-16-16H224c-8.800 0-16 7.200-16 16V288c0 8.800 7.200 16 16 16zm-64-16V64c0-35.300 28.700-64 64-64H448c35.300 0 64 28.700 64 64V288c0 35.300-28.700 64-64 64H224c-35.300 0-64-28.700-64-64z"/></svg></td><td class="c3"><a><span id="l4" style="letter-spacing:0.009px;position:relative;left:-0.71px;">You're reading this on Ghost</span></a></td><td class="c4"><span class="badge" style="background:#fbe6d0;color:#222;width:40.5px"><span id="b4" style="letter-spacing:0.372px;position:relative;left:0.21px;">app</span></span></td><td class="c5"><a class="w"><span id="v4">0</span></a></td><td class="c6"><svg class="ck" viewBox="0 0 448 512" width="14.94" height="17.07" style="" aria-hidden="true"><path fill="#4696e5" d="M438.600 105.400c12.500 12.500 12.500 32.800 0 45.300l-256 256c-12.500 12.500-32.800 12.500-45.300 0l-128-128c-12.500-12.500-12.500-32.800 0-45.300s32.800-12.500 45.300 0L160 338.700 393.400 105.400c12.500-12.500 32.800-12.500 45.300 0z"/></svg></td><td class="c7"><span class="dd"><svg viewBox="0 0 128 512" width="3.73" height="14.93" style="" aria-hidden="true"><path fill="#e6ebf1" d="M64 360a56 56 0 1 0 0 112 56 56 0 1 0 0-112zm0-160a56 56 0 1 0 0 112 56 56 0 1 0 0-112zM120 96A56 56 0 1 0 8 96a56 56 0 1 0 112 0z"/></svg></span></td></tr><tr><td class="c1"><span id="d5" style="letter-spacing:0.657px;position:relative;left:-0.55px;">2024-04-03 14:49</span></td><td class="c2"><a><span id="s5" style="letter-spacing:0.147px;position:relative;left:-0.88px;">https://a.formable.app/list</span></a><svg class="cp" viewBox="0 0 512 512" width="20.48" height="20.48" style="" aria-hidden="true"><path fill="#c9d1d9" d="M64 464H288c8.800 0 16-7.200 16-16V384h48v64c0 35.300-28.700 64-64 64H64c-35.300 0-64-28.700-64-64V224c0-35.300 28.700-64 64-64h64v48H64c-8.800 0-16 7.200-16 16V448c0 8.800 7.200 16 16 16zM224 304H448c8.800 0 16-7.200 16-16V64c0-8.800-7.200-16-16-16H224c-8.800 0-16 7.200-16 16V288c0 8.800 7.200 16 16 16zm-64-16V64c0-35.300 28.700-64 64-64H448c35.300 0 64 28.700 64 64V288c0 35.300-28.700 64-64 64H224c-35.300 0-64-28.700-64-64z"/></svg></td><td class="c3"><a><span id="l5" style="letter-spacing:-0.042px;position:relative;left:0.35px;">Apps List</span></a></td><td class="c4"><span class="badge" style="background:#8e2fab;color:#fff;width:73.2px"><span id="b5" style="letter-spacing:0.119px;position:relative;left:0.26px;">formable</span></span></td><td class="c5"><a><span id="v5">1</span></a></td><td class="c6"><svg class="ck" viewBox="0 0 448 512" width="14.94" height="17.07" style="" aria-hidden="true"><path fill="#4696e5" d="M438.600 105.400c12.500 12.500 12.500 32.800 0 45.300l-256 256c-12.500 12.500-32.800 12.500-45.300 0l-128-128c-12.500-12.500-12.500-32.800 0-45.300s32.800-12.500 45.300 0L160 338.700 393.400 105.400c12.500-12.500 32.800-12.500 45.300 0z"/></svg></td><td class="c7"><span class="dd"><svg viewBox="0 0 128 512" width="3.73" height="14.93" style="" aria-hidden="true"><path fill="#e6ebf1" d="M64 360a56 56 0 1 0 0 112 56 56 0 1 0 0-112zm0-160a56 56 0 1 0 0 112 56 56 0 1 0 0-112zM120 96A56 56 0 1 0 8 96a56 56 0 1 0 112 0z"/></svg></span></td></tr>
        </tbody>
      </table>
    </div>
  </section>
</div>
<div class="footer"><span id="foot" style="letter-spacing:0.274px;position:relative;left:1.73px;">Server: <b>v4.0.3</b> - Client: <b>v3.10.2</b></span></div>
</main>
</body>
</html>
